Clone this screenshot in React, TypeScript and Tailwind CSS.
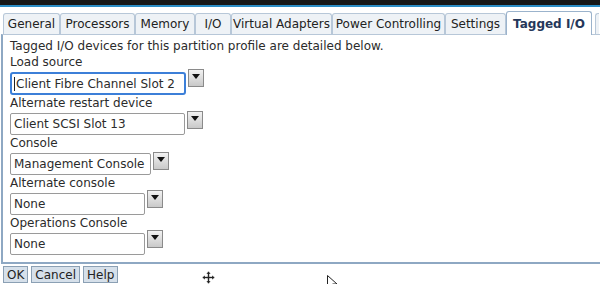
import React from 'react';

const tabs = [
  { label: 'General', w: 'w-[57px]' },
  { label: 'Processors', w: 'w-[75px]' },
  { label: 'Memory', w: 'w-[60px]' },
  { label: 'I/O', w: 'w-[36px]' },
  { label: 'Virtual Adapters', w: 'w-[101px]' },
  { label: 'Power Controlling', w: 'w-[113px]' },
  { label: 'Settings', w: 'w-[61px]' },
];

const DropButton: React.FC<{ lift: string }> = ({ lift }) => (
  <div
    className={`ml-[2px] ${lift} w-[16px] h-[18px] flex justify-center pt-[4px] border border-[#8a8a8a] bg-gradient-to-b from-[#f2f2f2] to-[#c9c9c9]`}
  >
    <svg width="8" height="5" viewBox="0 0 8 5">
      <path d="M0 0 L8 0 L4 5 Z" fill="#111" />
    </svg>
  </div>
);

type FieldProps = {
  label: string;
  value: string;
  width: string;
  lift: string;
  focused?: boolean;
};

const Field: React.FC<FieldProps> = ({ label, value, width, lift, focused }) => (
  <div className="flex flex-col">
    <div className="h-[16px] leading-[16px]">{label}</div>
    <div className="flex items-start mt-[2px]">
      {focused ? (
        <div className={`${width} h-[23px] border-2 border-[#3c7fd8] rounded-[3px] bg-white flex items-center pl-[2px]`}>
          <span className="w-px h-[14px] bg-[#222] mr-px" />
          <span>{value}</span>
        </div>
      ) : (
        <div className={`${width} h-[22px] border border-[#9a9a9a] rounded-[2px] bg-white flex items-center pl-[3px]`}>
          {value}
        </div>
      )}
      <DropButton lift={lift} />
    </div>
  </div>
);

const App: React.FC = () => {
  return (
    <div
      className="relative w-[600px] h-[284px] bg-white overflow-hidden text-[12px] text-[#2b2b2b]"
      style={{ fontFamily: '"DejaVu Sans", Verdana, sans-serif' }}
    >
      <div className="h-[5px] bg-[#161616]" />
      <div className="h-[2px] bg-[#2b8cc4]" />

      <div className="flex items-end mt-[4px] pl-[3px] h-[23px]">
        {tabs.map(t => (
          <div
            key={t.label}
            className={`${t.w} h-[21px] flex items-center justify-center border border-b-0 border-[#b7c7d8] rounded-t-[3px] bg-[#eef2f6] text-[#222]`}
          >
            {t.label}
          </div>
        ))}
        <div className="w-[86px] h-[24px] flex items-center justify-center border border-b-0 border-[#9bb3cc] rounded-t-[3px] bg-white font-bold text-[#25375a] relative top-[1px] z-10">
          Tagged I/O
        </div>
        <div className="w-[4px] h-[21px] border-l border-t border-[#b7c7d8] rounded-tl-[3px] bg-[#eef2f6] ml-[3px]" />
      </div>

      <div className="ml-[1px] border-l-2 border-t border-b-2 border-[#8ea8c3] border-t-[#b7c7d8] h-[230px] pl-[7px] pt-[4px] flex flex-col">
        <div className="h-[15px] leading-[15px]">Tagged I/O devices for this partition profile are detailed below.</div>
        <div className="flex flex-col">
          <Field label="Load source" value="Client Fibre Channel Slot 2" width="w-[176px]" lift="-mt-[3px]" focused />
          <Field label="Alternate restart device" value="Client SCSI Slot 13" width="w-[175px]" lift="-mt-[2px]" />
          <Field label="Console" value="Management Console" width="w-[141px]" lift="-mt-[1px]" />
          <Field label="Alternate console" value="None" width="w-[135px]" lift="-mt-[3px]" />
          <Field label="Operations Console" value="None" width="w-[135px]" lift="-mt-[3px]" />
        </div>
      </div>

      <div className="flex gap-[3px] pl-[3px] mt-[2px]">
        {['OK', 'Cancel', 'Help'].map(b => (
          <div
            key={b}
            className="h-[17px] px-[3px] flex items-center border border-[#8ba0b4] bg-[#d6e0ea] text-[#222]"
          >
            {b}
          </div>
        ))}
      </div>

      <svg className="absolute left-[202px] top-[271px]" width="13" height="13" viewBox="0 0 13 13">
        <path d="M6.5 0 L9 3 H7.5 V5.5 H10 V4 L13 6.5 L10 9 V7.5 H7.5 V10 H9 L6.5 13 L4 10 H5.5 V7.5 H3 V9 L0 6.5 L3 4 V5.5 H5.5 V3 H4 Z" fill="#222" stroke="#fff" strokeWidth="0.6" />
      </svg>
      <svg className="absolute left-[327px] top-[275px]" width="11" height="14" viewBox="0 0 11 14">
        <path d="M0.5 0.5 L0.5 13 L3.5 10 L6 14 L8 13 L5.5 9 L10 9 Z" fill="#fff" stroke="#222" strokeWidth="1" />
      </svg>
    </div>
  );
};

export default App;
